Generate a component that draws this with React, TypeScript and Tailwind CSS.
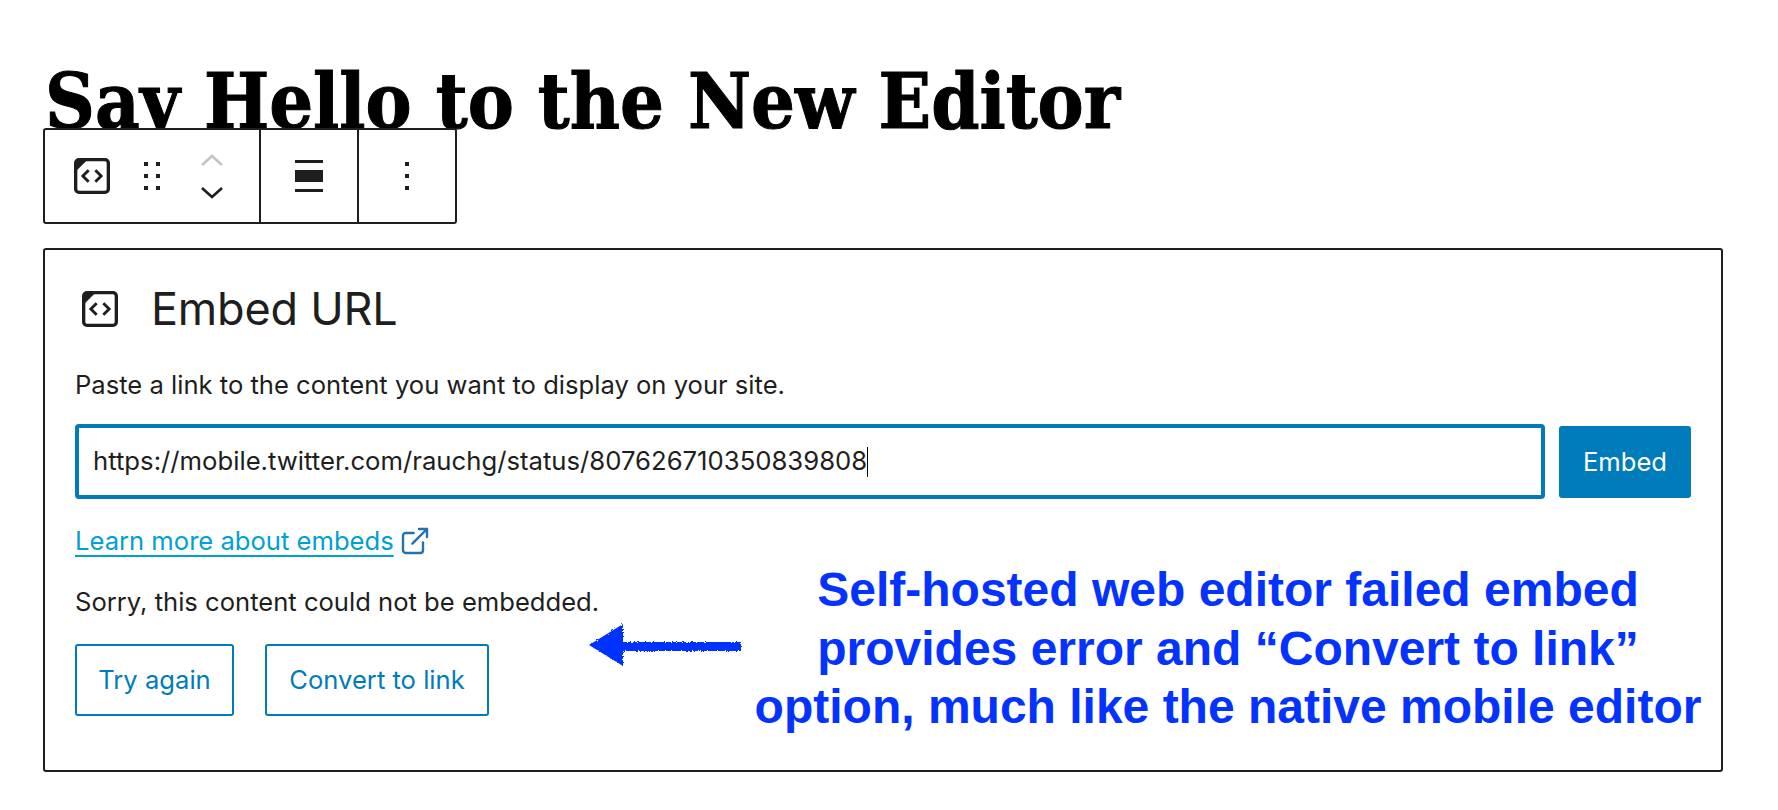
import { ExternalLink } from "lucide-react";

const EmbedIcon = ({ className }: { className: string }) => (
  <svg viewBox="0 0 24 24" className={className} fill="none">
    <rect x="2.2" y="2.2" width="19.6" height="19.6" rx="2" stroke="#1e1e1e" strokeWidth="2" />
    <path d="M2.5 9V2.5H9z" fill="#1e1e1e" />
    <path d="M10 8.5 6.5 12l3.5 3.5M14 8.5l3.5 3.5-3.5 3.5" stroke="#1e1e1e" strokeWidth="1.7" />
  </svg>
);

const DragIcon = () => (
  <svg viewBox="0 0 20 32" className="w-[20px] h-[32px]" fill="#1e1e1e">
    {[2, 14].map((x) =>
      [2, 14, 26].map((y) => <rect key={`${x}-${y}`} x={x} y={y} width="4" height="4" />),
    )}
  </svg>
);

export default function App() {
  return (
    <div className="relative min-h-[810px] bg-white pl-[43px] pr-[55px] font-['Inter',sans-serif] text-[#1e1e1e] overflow-hidden">
      <h1 className="h-[128px] pt-[53px] ml-[2px] font-['DejaVu_Serif',serif] font-bold text-[76.8px] leading-[96px] text-black whitespace-nowrap [font-stretch:condensed] [-webkit-text-stroke:1px_black]">
        Say Hello to the New Editor
      </h1>

      {/* Block toolbar */}
      <div className="relative flex w-[414px] h-[96px] bg-white border-2 border-[#1e1e1e] rounded-[3px]">
        <div className="flex items-center w-[216px] border-r-2 border-[#1e1e1e] pl-[27px]">
          <EmbedIcon className="w-[40px] h-[40px] shrink-0" />
          <div className="ml-[30px]">
            <DragIcon />
          </div>
          <div className="flex flex-col items-center gap-[19px] ml-[38px]">
            <svg viewBox="0 0 24 14" className="w-[24px] h-[14px]" fill="none">
              <path d="M2 12 12 3l10 9" stroke="#c4c4c4" strokeWidth="2.6" />
            </svg>
            <svg viewBox="0 0 24 14" className="w-[24px] h-[14px]" fill="none">
              <path d="M2 2l10 9 10-9" stroke="#1e1e1e" strokeWidth="2.6" />
            </svg>
          </div>
        </div>
        <div className="flex items-center justify-center w-[98px] border-r-2 border-[#1e1e1e]">
          <svg viewBox="0 0 28 36" className="w-[28px] h-[36px]" fill="#1e1e1e">
            <rect x="0" y="2" width="28" height="3" />
            <rect x="0" y="12" width="28" height="12" />
            <rect x="0" y="31" width="28" height="3" />
          </svg>
        </div>
        <div className="flex items-center justify-center flex-1">
          <svg viewBox="0 0 4 32" className="w-[4px] h-[32px]" fill="#1e1e1e">
            <rect y="2" width="4" height="4" />
            <rect y="14" width="4" height="4" />
            <rect y="26" width="4" height="4" />
          </svg>
        </div>
      </div>

      {/* Embed placeholder */}
      <div className="mt-[24px] h-[524px] border-2 border-[#1e1e1e] rounded-[3px] pl-[30px] pr-[30px] pt-[37px]">
        <div className="flex items-center h-[44px]">
          <EmbedIcon className="w-[40px] h-[40px] ml-[5px] shrink-0" />
          <span className="ml-[31px] text-[45px] leading-[44px] tracking-[-0.2px]">Embed URL</span>
        </div>
        <p className="mt-[38px] text-[25.6px] leading-[32px]">
          Paste a link to the content you want to display on your site.
        </p>
        <div className="flex gap-[14px] mt-[23px]">
          <div className="flex items-center flex-1 h-[75px] border-4 border-[#007cba] rounded-[4px] pl-[14px] text-[25.7px]">
            https://mobile.twitter.com/rauchg/status/807626710350839808
            <span className="w-[1px] h-[30px] bg-black" />
          </div>
          <button className="w-[132px] h-[72px] mt-[2px] bg-[#007cba] text-white text-[25.6px] rounded-[3px]">
            Embed
          </button>
        </div>
        <div className="flex items-center mt-[24px] h-[36px] text-[#00a0d2] text-[25.6px]">
          <span className="underline underline-offset-[5px]">Learn more about embeds</span>
          <ExternalLink className="ml-[5px] w-[32px] h-[32px] text-[#2271b1]" strokeWidth={1.8} />
        </div>
        <p className="mt-[27px] text-[25.6px] leading-[32px]">Sorry, this content could not be embedded.</p>
        <div className="flex gap-[31px] mt-[26px]">
          <button className="w-[159px] h-[72px] border-2 border-[#007cba] rounded-[3px] text-[#007cba] text-[25.6px]">
            Try again
          </button>
          <button className="w-[224px] h-[72px] border-2 border-[#007cba] rounded-[3px] text-[#007cba] text-[25.6px]">
            Convert to link
          </button>
        </div>
      </div>

      {/* Annotation over the screenshot */}
      <svg viewBox="0 0 156 48" className="absolute left-[586px] top-[621px] w-[158px] h-[48px]">
        <filter id="rough">
          <feTurbulence type="fractalNoise" baseFrequency="0.7" numOctaves="2" />
          <feDisplacementMap in="SourceGraphic" scale="4" />
        </filter>
        <g filter="url(#rough)" fill="#0433ff">
          <path d="M2 24 36 3v42z" />
          <rect x="34" y="21" width="120" height="9" />
        </g>
      </svg>
      <div className="absolute left-[728px] w-[1000px] top-[561px] text-center font-['Liberation_Sans',sans-serif] font-bold text-[48px] leading-[58.7px] text-[#0433ff]">
        Self-hosted web editor failed embed
        <br />
        provides error and “Convert to link”
        <br />
        option, much like the native mobile editor
      </div>
    </div>
  );
}
